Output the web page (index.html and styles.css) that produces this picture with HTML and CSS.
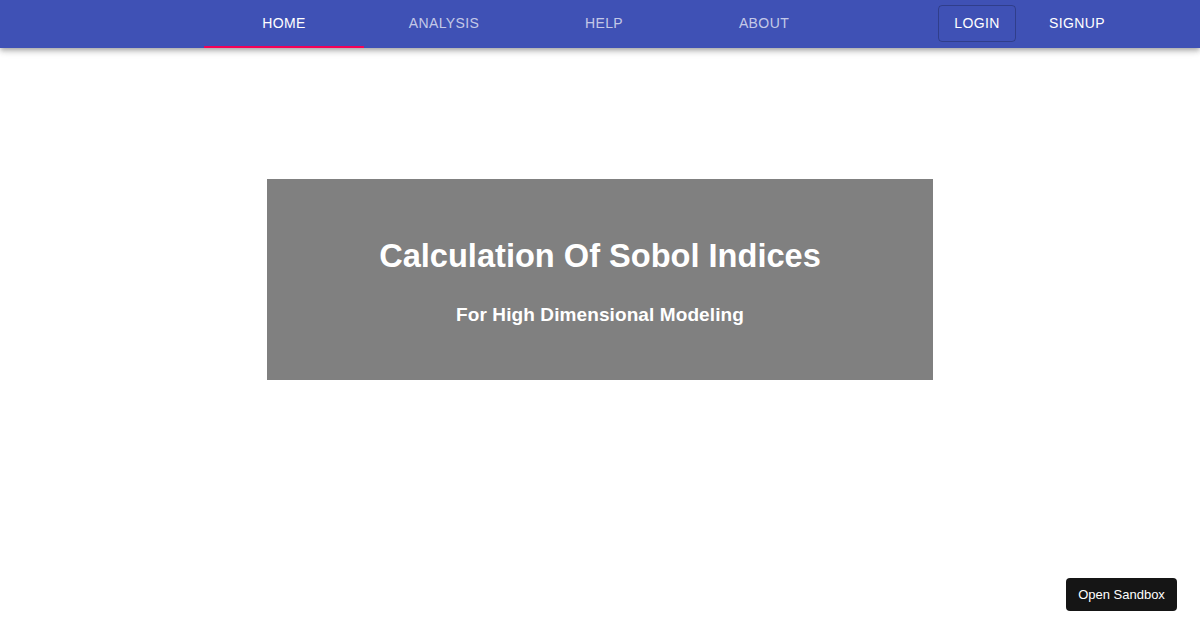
FILE: index.html
```html
<!DOCTYPE html>
<html>
<head>
<meta charset="utf-8">
<link rel="stylesheet" href="styles.css">
</head>
<body>
<header class="appbar">
  <nav class="tabs">
    <div class="tab active">HOME</div>
    <div class="tab">ANALYSIS</div>
    <div class="tab">HELP</div>
    <div class="tab">ABOUT</div>
  </nav>
  <div class="actions">
    <button class="btn outlined">LOGIN</button>
    <button class="btn">SIGNUP</button>
  </div>
</header>
<main class="content">
  <section class="hero">
    <h1 class="title">Calculation Of Sobol Indices</h1>
    <h2 class="subtitle">For High Dimensional Modeling</h2>
  </section>
</main>
<button class="sandbox">Open Sandbox</button>
</body>
</html>
```
FILE: styles.css
```css
* { box-sizing: border-box; }
html, body { margin: 0; padding: 0; }
body {
  width: 1200px;
  height: 630px;
  background: #fff;
  font-family: "Liberation Sans", Arial, sans-serif;
  overflow: hidden;
  position: relative;
}
.appbar {
  height: 48px;
  background: #3f51b5;
  display: flex;
  align-items: stretch;
  box-shadow: 0 2px 4px -1px rgba(0,0,0,0.2), 0 4px 5px 0 rgba(0,0,0,0.14), 0 1px 10px 0 rgba(0,0,0,0.12);
  position: relative;
  z-index: 2;
}
.tabs {
  display: flex;
  margin-left: 204px;
}
.tab {
  width: 160px;
  display: flex;
  align-items: center;
  justify-content: center;
  font-size: 14px;
  letter-spacing: 0.4px;
  color: rgba(255,255,255,0.7);
  position: relative;
  padding-bottom: 2px;
}
.tab.active { color: #fff; }
.tab.active::after {
  content: "";
  position: absolute;
  left: 0; right: 0; bottom: 0;
  height: 2px;
  background: #f50057;
}
.actions {
  display: flex;
  align-items: center;
  margin-left: 94px;
  padding-bottom: 1px;
}
.btn {
  font-family: inherit;
  font-size: 14px;
  letter-spacing: 0.4px;
  color: #fff;
  background: transparent;
  border: 1px solid transparent;
  border-radius: 4px;
  height: 37px;
  padding: 0 8px 1px;
  cursor: pointer;
}
.btn.outlined {
  border-color: rgba(0,0,0,0.23);
  width: 78px;
  margin-right: 24px;
}
.content {
  display: flex;
  justify-content: center;
  padding-top: 131px;
}
.hero {
  width: 666px;
  height: 201px;
  background: #808080;
  color: #fff;
  text-align: center;
  padding-top: 57px;
}
.title {
  margin: 0;
  font-size: 32.6px;
  font-weight: bold;
  line-height: 40px;
}
.subtitle {
  margin: 27px 0 0;
  font-size: 19px;
  font-weight: bold;
  line-height: 24px;
  letter-spacing: 0.1px;
}
.sandbox {
  position: absolute;
  right: 23px;
  bottom: 19px;
  width: 111px;
  height: 33px;
  background: #151515;
  color: #fff;
  border: none;
  border-radius: 4px;
  font-family: "Liberation Sans", Arial, sans-serif;
  font-size: 13px;
}
```
